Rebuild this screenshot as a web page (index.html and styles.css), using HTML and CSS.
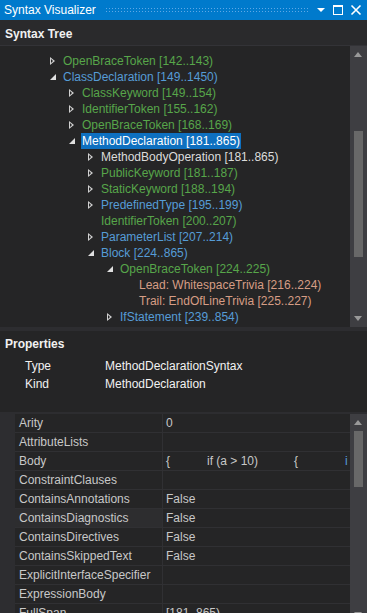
FILE: index.html
```html
<!DOCTYPE html>
<html lang="en">
  <head>
    <meta charset="UTF-8" />
    <meta name="viewport" content="width=device-width, initial-scale=1.0" />
    <title>Syntax Visualizer</title>
    <link rel="stylesheet" href="styles.css">
  </head>
  <body>
    <div class="window">
      <div class="titlebar">
        <span class="title">Syntax Visualizer</span>
        <span class="grip"></span>
        <span class="tb-icons">
          <svg width="10" height="10" viewBox="0 0 10 10"><polygon points="1,3 9,3 5,7" fill="#fff"/></svg>
          <svg width="12" height="12" viewBox="0 0 12 12"><rect x="1.5" y="1.5" width="9" height="9" fill="none" stroke="#fff"/><rect x="1" y="1" width="10" height="2" fill="#fff"/></svg>
          <svg width="12" height="12" viewBox="0 0 12 12"><path d="M1.5 1.5 L10.5 10.5 M10.5 1.5 L1.5 10.5" stroke="#fff" stroke-width="1.6"/></svg>
        </span>
      </div>

      <div class="pane-header">Syntax Tree</div>

      <div class="tree-pane">
        <div class="tree">
          <div class="node lvl0"><span class="tog closed"></span><span class="tok">OpenBraceToken [142..143)</span></div>
          <div class="node lvl0"><span class="tog open"></span><span class="syn">ClassDeclaration [149..1450)</span></div>
          <div class="node lvl1"><span class="tog closed"></span><span class="tok">ClassKeyword [149..154)</span></div>
          <div class="node lvl1"><span class="tog closed"></span><span class="tok">IdentifierToken [155..162)</span></div>
          <div class="node lvl1"><span class="tog closed"></span><span class="tok">OpenBraceToken [168..169)</span></div>
          <div class="node lvl1"><span class="tog open"></span><span class="syn selected">MethodDeclaration [181..865)</span></div>
          <div class="node lvl2"><span class="tog closed"></span><span class="plain">MethodBodyOperation [181..865)</span></div>
          <div class="node lvl2"><span class="tog closed"></span><span class="tok">PublicKeyword [181..187)</span></div>
          <div class="node lvl2"><span class="tog closed"></span><span class="tok">StaticKeyword [188..194)</span></div>
          <div class="node lvl2"><span class="tog closed"></span><span class="syn">PredefinedType [195..199)</span></div>
          <div class="node lvl2"><span class="tog"></span><span class="tok">IdentifierToken [200..207)</span></div>
          <div class="node lvl2"><span class="tog closed"></span><span class="syn">ParameterList [207..214)</span></div>
          <div class="node lvl2"><span class="tog open"></span><span class="syn">Block [224..865)</span></div>
          <div class="node lvl3"><span class="tog open"></span><span class="tok">OpenBraceToken [224..225)</span></div>
          <div class="node lvl4"><span class="tog"></span><span class="triv">Lead: WhitespaceTrivia [216..224)</span></div>
          <div class="node lvl4"><span class="tog"></span><span class="triv">Trail: EndOfLineTrivia [225..227)</span></div>
          <div class="node lvl3"><span class="tog closed"></span><span class="syn">IfStatement [239..854)</span></div>
        </div>
        <div class="vscroll tree-scroll">
          <span class="arrow up"></span>
          <span class="track"><span class="thumb"></span></span>
          <span class="arrow down"></span>
        </div>
      </div>

      <div class="splitter"></div>

      <div class="props">
        <div class="props-title">Properties</div>
        <div class="summary-row"><span class="summary-key">Type</span><span>MethodDeclarationSyntax</span></div>
        <div class="summary-row"><span class="summary-key">Kind</span><span>MethodDeclaration</span></div>
      </div>

      <div class="grid-pane">
        <div class="grid">
          <div class="row"><span class="key">Arity</span><span class="val">0</span></div>
          <div class="row"><span class="key">AttributeLists</span><span class="val"></span></div>
          <div class="row"><span class="key">Body</span><span class="val body-val"><span>{</span><span class="b1">if (a &gt; 10)</span><span class="b2">{</span><span class="b3">i</span></span></div>
          <div class="row"><span class="key">ConstraintClauses</span><span class="val"></span></div>
          <div class="row"><span class="key">ContainsAnnotations</span><span class="val">False</span></div>
          <div class="row hover"><span class="key">ContainsDiagnostics</span><span class="val">False</span></div>
          <div class="row"><span class="key">ContainsDirectives</span><span class="val">False</span></div>
          <div class="row"><span class="key">ContainsSkippedText</span><span class="val">False</span></div>
          <div class="row"><span class="key">ExplicitInterfaceSpecifier</span><span class="val"></span></div>
          <div class="row"><span class="key">ExpressionBody</span><span class="val"></span></div>
          <div class="row"><span class="key">FullSpan</span><span class="val">[181..865)</span></div>
        </div>
        <div class="vscroll grid-scroll">
          <span class="arrow up"></span>
          <span class="track"><span class="thumb"></span></span>
          <span class="arrow down"></span>
        </div>
      </div>
    </div>
  </body>
</html>
```

FILE: styles.css
```css
body {
  margin: 0;
  background-color: #252526;
  font-family: "Liberation Sans", Arial, sans-serif;
  font-size: 12px;
  color: #f1f1f1;
  overflow: hidden;
}
.window {
  width: 367px;
  height: 613px;
  display: flex;
  flex-direction: column;
  overflow: hidden;
}
.titlebar {
  height: 20px;
  flex: none;
  background-color: #007acc;
  display: flex;
  align-items: center;
  padding-left: 4px;
  color: #fff;
}
.title {
  font-size: 12px;
}
.grip {
  flex: 1;
  height: 6px;
  margin: 0 6px 0 9px;
  background-image: radial-gradient(circle, #5fa8e6 0.6px, transparent 0.9px);
  background-size: 3px 3px;
}
.tb-icons {
  display: flex;
  align-items: center;
  gap: 6px;
  padding-right: 5px;
}
.tb-icons svg {
  display: block;
}
.pane-header {
  height: 26px;
  flex: none;
  display: flex;
  align-items: center;
  padding: 2px 0 0 5px;
  font-weight: bold;
  border-bottom: 1px solid #333337;
  box-sizing: border-box;
  background-color: #2a2a2c;
}
.tree-pane {
  height: 281px;
  flex: none;
  display: flex;
  background-color: #252526;
}
.tree {
  flex: 1;
  padding-top: 7px;
  overflow: hidden;
}
.node {
  height: 16px;
  display: flex;
  align-items: center;
  white-space: nowrap;
}
.lvl0 { padding-left: 50px; }
.lvl1 { padding-left: 69px; }
.lvl2 { padding-left: 88px; }
.lvl3 { padding-left: 107px; }
.lvl4 { padding-left: 126px; }
.tog {
  width: 13px;
  height: 16px;
  flex: none;
  position: relative;
}
.tog.closed::before {
  content: "";
  position: absolute;
  left: 0;
  top: 4px;
  border-left: 5px solid #d0d0d0;
  border-top: 4px solid transparent;
  border-bottom: 4px solid transparent;
}
.tog.closed::after {
  content: "";
  position: absolute;
  left: 1px;
  top: 6px;
  border-left: 2px solid #252526;
  border-top: 2px solid transparent;
  border-bottom: 2px solid transparent;
}
.tog.open::before {
  content: "";
  position: absolute;
  left: 0;
  top: 5px;
  border-bottom: 6px solid #e0e0e0;
  border-left: 6px solid transparent;
}
.tok { color: #57a64a; }
.syn { color: #569cd6; }
.plain { color: #dcdcdc; }
.triv { color: #d69d85; }
.selected {
  background-color: #0e70c0;
  color: #fff;
  padding: 0 1px;
  margin-left: -1px;
  line-height: 16px;
}
.vscroll {
  width: 17px;
  flex: none;
  background-color: #3e3e42;
  display: flex;
  flex-direction: column;
  align-items: center;
}
.arrow {
  height: 17px;
  width: 17px;
  flex: none;
  position: relative;
}
.arrow.up::before,
.arrow.down::before {
  content: "";
  position: absolute;
  left: 4px;
  border-left: 4.5px solid transparent;
  border-right: 4.5px solid transparent;
}
.arrow.up::before {
  top: 6px;
  border-bottom: 5px solid #999999;
}
.arrow.down::before {
  top: 6px;
  border-top: 5px solid #999999;
}
.track {
  flex: 1;
  width: 9px;
  display: flex;
  flex-direction: column;
}
.tree-scroll .thumb {
  margin-top: 68px;
  height: 126px;
  background-color: #686868;
}
.grid-scroll .thumb {
  margin-top: 0;
  height: 56px;
  background-color: #686868;
}
.splitter {
  height: 4px;
  flex: none;
  background-color: #2d2d30;
}
.props {
  height: 81px;
  flex: none;
  padding-top: 3px;
  box-sizing: border-box;
  background-color: #252526;
}
.props-title {
  font-weight: bold;
  padding-left: 5px;
  height: 23px;
  line-height: 20px;
}
.summary-row {
  display: flex;
  height: 18px;
  align-items: center;
  padding-left: 25px;
}
.summary-key {
  width: 80px;
}
.grid-pane {
  flex: 1;
  display: flex;
  border-top: 2px solid #2d2d30;
  background-color: #2d2d30;
  padding-left: 15px;
}
.grid {
  flex: 1;
  overflow: hidden;
}
.row {
  height: 18px;
  display: grid;
  grid-template-columns: 148px 1fr;
  border-bottom: 1px solid #303033;
  color: #c8c8c8;
}
.row span.key,
.row span.val {
  background-color: #252526;
  line-height: 18px;
  white-space: nowrap;
  overflow: hidden;
}
.key {
  padding-left: 4px;
  border-right: 1px solid #303033;
}
.val {
  padding-left: 3px;
}
.row.hover .key {
  background-color: #2d2d2f;
}
.body-val {
  display: flex;
}
.b1 { margin-left: 37px; }
.b2 { margin-left: 36px; }
.b3 { margin-left: 47px; color: #569cd6; }
```
